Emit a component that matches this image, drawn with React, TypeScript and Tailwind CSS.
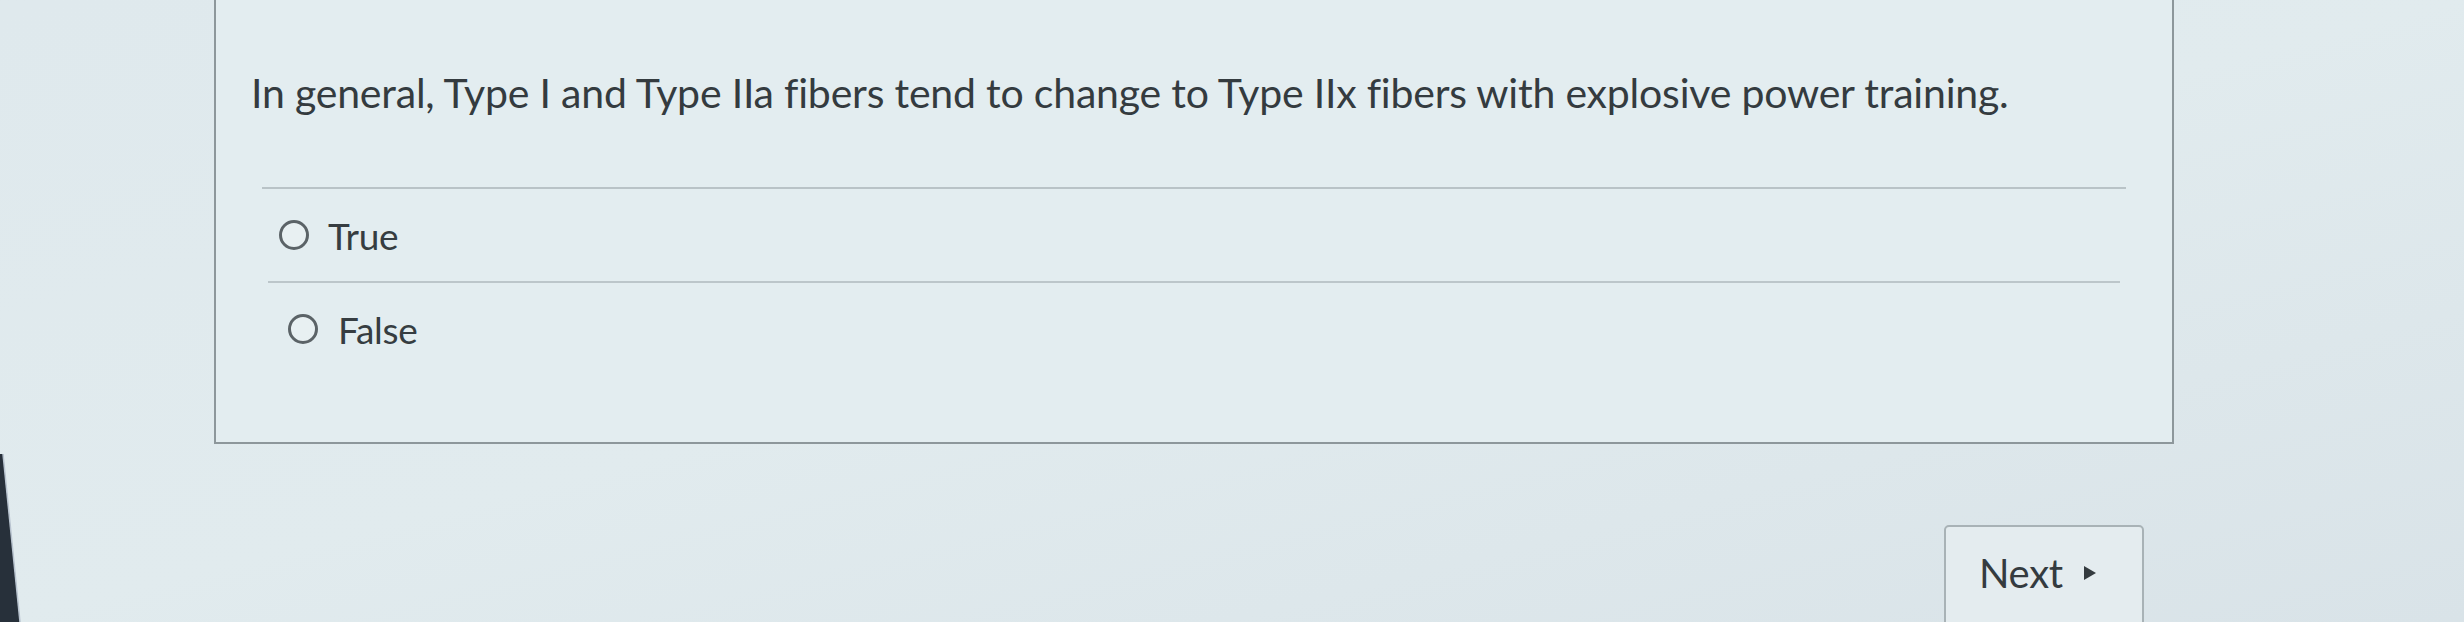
import React from "react";

const font = { fontFamily: "Lato, 'Open Sans', 'Noto Sans', sans-serif" };

function Radio() {
  return (
    <span className="inline-block shrink-0 w-[30px] h-[30px] rounded-full border-[3px] border-[#5b6367] bg-[#e8f0f2]" />
  );
}

function Option({ label, indent, gap }: { label: string; indent: string; gap: string }) {
  return (
    <label className={`flex items-center h-[92px] ${indent} ${gap}`}>
      <Radio />
      <span className="text-[37px] text-[#363d41] leading-none tracking-[-0.3px]">{label}</span>
    </label>
  );
}

export default function App() {
  return (
    <div
      className="w-[2464px] h-[622px] overflow-hidden flex bg-gradient-to-br from-[#dfe9ed] via-[#e1ebee] to-[#d9e3e8]"
      style={font}
    >
      {/* monitor bezel peeking in at the lower left */}
      <div className="w-[18px] h-full flex flex-col justify-end shrink-0">
        <svg width="22" height="168" viewBox="0 0 22 168" className="-mr-[4px]">
          <polygon points="0,0 3,0 20,168 0,168" fill="#27303a" />
          <line x1="3" y1="0" x2="20" y2="168" stroke="#b9c4d0" strokeWidth="1.5" />
        </svg>
      </div>

      <div className="flex-1 flex flex-col">
        {/* question card */}
        <div className="ml-[196px] w-[1960px] h-[444px] shrink-0 border-l-2 border-r-2 border-b-2 border-[#8d979b] bg-[#e3edf0] flex flex-col">
          <p className="pl-[35px] pt-[72px] text-[41px] leading-none text-[#343b3f] tracking-[-0.2px] whitespace-nowrap">
            In general, Type I and Type IIa fibers tend to change to Type IIx fibers with explosive power training.
          </p>
          <div className="mt-[74px] mx-[46px] h-[2px] bg-[#b9c3c7]" />
          <Option label="True" indent="pl-[63px]" gap="gap-[19px]" />
          <div className="mx-[52px] h-[2px] bg-[#bcc6ca]" />
          <Option label="False" indent="pl-[72px]" gap="gap-[20px]" />
        </div>

        {/* navigation */}
        <div className="flex justify-end pr-[320px] pt-[81px]">
          <button className="w-[200px] h-[110px] pb-[14px] pl-[33px] rounded-[5px] border-2 border-[#a8b2b6] bg-[#e4ecef] flex items-center gap-[20px] text-[#343b3f]">
            <span className="text-[40px] leading-none tracking-[-0.3px]">Next</span>
            <svg width="14" height="16" viewBox="0 0 14 16">
              <polygon points="1,1 13,8 1,15" fill="#343b3f" />
            </svg>
          </button>
        </div>
      </div>
    </div>
  );
}
